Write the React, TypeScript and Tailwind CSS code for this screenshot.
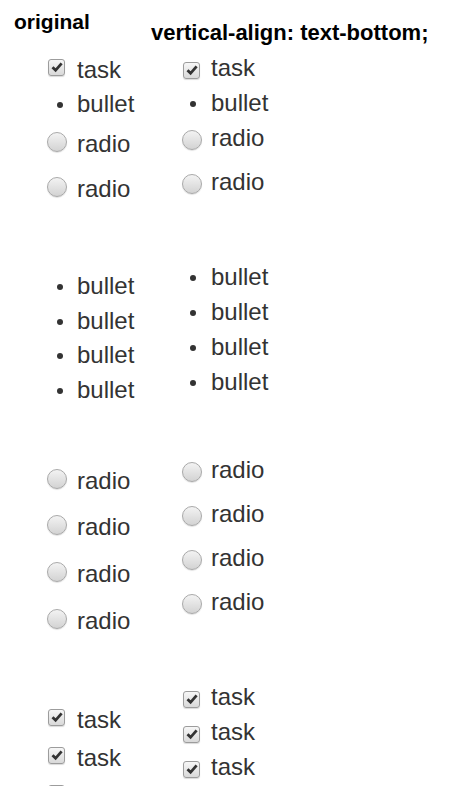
import React from 'react';

function Check() {
  return (
    <span className="flex w-[17px] h-[17px] items-center justify-center rounded-[3px] border border-[#9c9c9c] bg-gradient-to-b from-[#f7f7f7] to-[#d9d9d9] shadow-[0_1px_1px_rgba(0,0,0,0.15)]">
      <svg viewBox="0 0 12 12" className="w-[12px] h-[12px]">
        <path d="M1.5 6.2 L4.6 9.3 L10.6 2.4" fill="none" stroke="#333333" strokeWidth="2.8" strokeLinejoin="miter" />
      </svg>
    </span>
  );
}

function Radio() {
  return (
    <span className="block w-[20px] h-[20px] rounded-full border border-[#a9a9a9] bg-gradient-to-b from-[#f3f3f3] to-[#d3d3d3] shadow-[0_1px_1px_rgba(0,0,0,0.12)]" />
  );
}

function Dot() {
  return <span className="block w-[6px] h-[6px] rounded-full bg-[#333333]" />;
}

type Kind = 'task' | 'bullet' | 'radio';

function Row({ kind, right, className }: { kind: Kind; right?: boolean; className: string }) {
  let icon;
  if (kind === 'task') icon = <span className={right ? 'ml-[1px] translate-y-[2px]' : 'ml-0 -translate-y-[3px]'}><Check /></span>;
  else if (kind === 'bullet') icon = <span className={right ? 'ml-[8px] translate-y-[1px]' : 'ml-[9px] translate-y-[1px]'}><Dot /></span>;
  else icon = <span className={right ? 'ml-0 translate-y-[2px]' : '-ml-[1px] -translate-y-[2px]'}><Radio /></span>;
  return (
    <div className={`flex h-[34px] items-center ${className}`}>
      <div className="flex w-[29px] shrink-0 items-center">{icon}</div>
      <span className="text-[24px] leading-[28px] text-[#333333]">{kind}</span>
    </div>
  );
}

export default function App() {
  return (
    <div className="flex h-[786px] overflow-hidden bg-white font-['Liberation_Sans',Arial,sans-serif]">
      <div className="flex w-[151px] shrink-0 flex-col pl-[14px] pt-[10px]">
        <h3 className="h-[25px] text-[21px] leading-[24px] font-bold text-black">original</h3>
        <div className="ml-[34px] flex flex-col">
          <Row kind="task" className="mt-[19px]" />
          <Row kind="bullet" className="mt-0" />
          <Row kind="radio" className="mt-[6px]" />
          <Row kind="radio" className="mt-[11px]" />
          <Row kind="bullet" className="mt-[63px]" />
          <Row kind="bullet" className="mt-[1px]" />
          <Row kind="bullet" className="mt-0" />
          <Row kind="bullet" className="mt-[1px]" />
          <Row kind="radio" className="mt-[57px]" />
          <Row kind="radio" className="mt-[12px]" />
          <Row kind="radio" className="mt-[13px]" />
          <Row kind="radio" className="mt-[13px]" />
          <Row kind="task" className="mt-[65px]" />
          <Row kind="task" className="mt-[4px]" />
          <Row kind="task" className="mt-[4px]" />
        </div>
      </div>
      <div className="flex flex-col pt-[21px]">
        <h3 className="h-[24px] text-[22px] leading-[24px] font-bold text-black whitespace-nowrap">vertical-align: text-bottom;</h3>
        <div className="ml-[31px] flex flex-col">
          <Row right kind="task" className="mt-[6px]" />
          <Row right kind="bullet" className="mt-[1px]" />
          <Row right kind="radio" className="mt-[1px]" />
          <Row right kind="radio" className="mt-[10px]" />
          <Row right kind="bullet" className="mt-[61px]" />
          <Row right kind="bullet" className="mt-[1px]" />
          <Row right kind="bullet" className="mt-[1px]" />
          <Row right kind="bullet" className="mt-[1px]" />
          <Row right kind="radio" className="mt-[54px]" />
          <Row right kind="radio" className="mt-[10px]" />
          <Row right kind="radio" className="mt-[10px]" />
          <Row right kind="radio" className="mt-[10px]" />
          <Row right kind="task" className="mt-[61px]" />
          <Row right kind="task" className="mt-[1px]" />
          <Row right kind="task" className="mt-[1px]" />
        </div>
      </div>
    </div>
  );
}
